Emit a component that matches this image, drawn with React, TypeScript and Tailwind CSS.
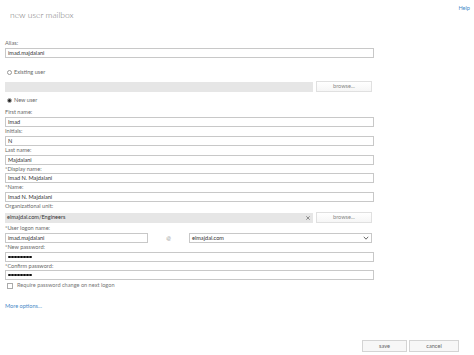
import React from "react";

type FieldProps = {
  label: string;
  value?: string;
  password?: boolean;
  gap?: string;
};

const Field: React.FC<FieldProps> = ({ label, value, password, gap = "mt-[1px]" }) => (
  <div className="flex flex-col">
    <div className="h-[8px] leading-[8px] text-[#6a6a6a]">{label}</div>
    <div
      className={`${gap} h-[10px] w-[369px] border border-[#c8c8c8] bg-white flex items-center px-[2px] text-[#333]`}
    >
      {password ? <PasswordDots /> : value}
    </div>
  </div>
);

const PasswordDots = () => (
  <div className="flex gap-[0.5px]">
    {Array.from({ length: 8 }).map((_, i) => (
      <span key={i} className="w-[2.5px] h-[2.5px] rounded-full bg-[#111]" />
    ))}
  </div>
);

const BrowseButton = () => (
  <div className="ml-[3px] h-[11px] w-[56px] border border-[#e0e0e0] bg-gradient-to-b from-white to-[#f6f6f6] flex items-center justify-center text-[#888]">
    browse...
  </div>
);

const Radio: React.FC<{ checked?: boolean; label: string }> = ({ checked, label }) => (
  <div className="h-[8px] flex items-center gap-[2px] pl-[2px] text-[#6a6a6a]">
    <span className="w-[5px] h-[5px] rounded-full border border-[#999] bg-white flex items-center justify-center">
      {checked && <span className="w-[3px] h-[3px] rounded-full bg-[#222]" />}
    </span>
    {label}
  </div>
);

export default function App() {
  return (
    <div className="w-[474px] h-[355px] bg-white flex flex-col font-['Lato','Open_Sans',sans-serif] text-[5.6px] overflow-hidden">
      <div className="h-[39px] flex justify-between items-start">
        <div className="pl-[10px] pt-[9px] text-[8.5px] font-light text-[#777] leading-[12px]">new user mailbox</div>
        <div className="pr-[4px] pt-[4px] text-[#4a8ac8] leading-[8px]">Help</div>
      </div>

      <div className="pl-[5px] flex flex-col">
        <Field label="Alias:" value="imad.majdalani" />

        <div className="mt-[10px]">
          <Radio label="Existing user" />
        </div>
        <div className="mt-[5px] flex items-center">
          <div className="h-[10px] w-[308px] bg-[#e6e6e6]" />
          <BrowseButton />
        </div>

        <div className="mt-[4px]">
          <Radio checked label="New user" />
        </div>

        <div className="mt-[4px]">
          <Field label="First name:" value="Imad" />
        </div>
        <Field label="Initials:" value="N" />
        <Field label="Last name:" value="Majdalani" />
        <Field label="*Display name:" value="Imad N. Majdalani" gap="mt-0" />
        <Field label="*Name:" value="Imad N. Majdalani" />

        <div className="h-[8px] leading-[8px] text-[#6a6a6a]">Organizational unit:</div>
        <div className="mt-[2px] flex items-center">
          <div className="h-[10px] w-[308px] bg-[#e6e6e6] flex items-center justify-between pl-[2px] pr-[3px] text-[#333]">
            elmajdal.com/Engineers
            <svg width="4" height="4" viewBox="0 0 4 4">
              <path d="M0.3 0.3 L3.7 3.7 M3.7 0.3 L0.3 3.7" stroke="#666" strokeWidth="0.7" />
            </svg>
          </div>
          <BrowseButton />
        </div>

        <div className="mt-[1px] h-[8px] leading-[8px] text-[#6a6a6a]">*User logon name:</div>
        <div className="mt-[1px] flex items-center">
          <div className="h-[10px] w-[143px] border border-[#c8c8c8] flex items-center px-[2px] text-[#333]">
            imad.majdalani
          </div>
          <div className="w-[41px] text-center text-[#999]">@</div>
          <div className="h-[10px] w-[183px] border border-[#c8c8c8] flex items-center justify-between px-[2px] text-[#333]">
            elmajdal.com
            <svg width="6" height="4" viewBox="0 0 6 4">
              <path d="M0.8 0.8 L3 3.2 L5.2 0.8" stroke="#444" strokeWidth="0.8" fill="none" />
            </svg>
          </div>
        </div>

        <Field label="*New password:" password />
        <Field label="*Confirm password:" password gap="mt-0" />

        <div className="mt-[1px] h-[9px] flex items-center gap-[4px] pl-[2px] text-[#777]">
          <span className="w-[6px] h-[6px] border border-[#aaa] bg-white" />
          Require password change on next logon
        </div>

        <div className="mt-[12px] h-[8px] leading-[8px] text-[#4a8ac8]">More options...</div>
      </div>

      <div className="mt-auto mb-[3px] pr-[15px] flex justify-end gap-[2px]">
        <div className="h-[12px] w-[45px] border border-[#d4d4d4] bg-[#f7f7f7] flex items-center justify-center text-[#666]">
          save
        </div>
        <div className="h-[12px] w-[50px] border border-[#d4d4d4] bg-[#f7f7f7] flex items-center justify-center text-[#666]">
          cancel
        </div>
      </div>
    </div>
  );
}
